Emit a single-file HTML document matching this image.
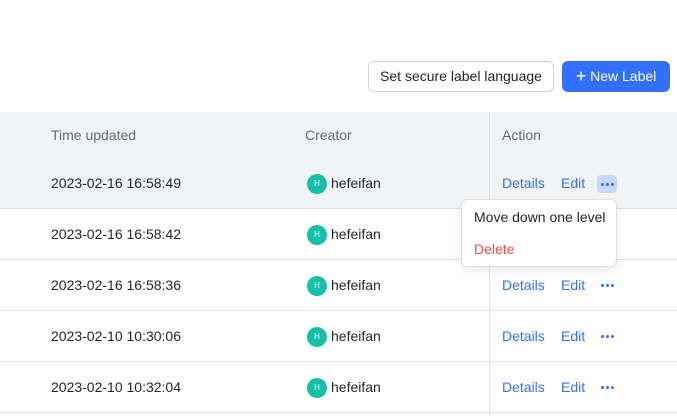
<!DOCTYPE html>
<html><head><style>
*{margin:0;padding:0;box-sizing:border-box}
body{width:677px;height:416px;background:#fff;font-family:"Liberation Sans",sans-serif;font-size:14px;color:#1f2329;position:relative;overflow:hidden}
.a{position:absolute}
.btn{position:absolute;top:61px;height:31px;border-radius:6px;font-size:14px;line-height:29px;text-align:center}
.hd{top:112px;left:0;width:677px;height:46px;background:#f2f3f5}
.row{left:0;width:677px;height:51px;border-bottom:1px solid #dee0e3}
.t{left:51px}
.av{left:307px;width:20px;height:20px;border-radius:50%;background:#14c0a8;color:#fff;font-size:8px;text-align:center;line-height:20px}
.nm{left:331px}
.lk{color:#3370ff}
.dots{width:20px;height:18px;border-radius:4px;display:flex;align-items:center;justify-content:center;gap:2px}
.dots i{display:block;width:3px;height:3px;border-radius:50%;background:#3370ff}
</style></head><body>
<div class="btn" style="left:368px;width:186px;border:1px solid #d0d3d6;color:#1f2329">Set secure label language</div>
<div class="btn" style="left:562px;width:108px;background:#3370ff;color:#fff;border:1px solid #3370ff"><span style="font-size:18px;vertical-align:-1px;font-weight:300">+</span> New Label</div>
<div class="a hd"></div>
<div class="a" style="top:127px;left:51px;color:#646a73">Time updated</div>
<div class="a" style="top:127px;left:305px;color:#646a73">Creator</div>
<div class="a" style="top:127px;left:502px;color:#646a73">Action</div>
<div class="a row" style="top:158px;height:51px;background:#f2f3f5"></div>
<div class="a row" style="top:209px"></div>
<div class="a row" style="top:260px"></div>
<div class="a row" style="top:311px"></div>
<div class="a row" style="top:362px"></div>
<div class="a" style="left:489px;top:112px;width:1px;height:304px;background:#dee0e3"></div>

<div class="a t" style="top:175px">2023-02-16 16:58:49</div>
<div class="a t" style="top:226px">2023-02-16 16:58:42</div>
<div class="a t" style="top:277px">2023-02-16 16:58:36</div>
<div class="a t" style="top:328px">2023-02-10 10:30:06</div>
<div class="a t" style="top:379px">2023-02-10 10:32:04</div>

<div class="a av" style="top:174px">H</div><div class="a nm" style="top:175px">hefeifan</div>
<div class="a av" style="top:225px">H</div><div class="a nm" style="top:226px">hefeifan</div>
<div class="a av" style="top:276px">H</div><div class="a nm" style="top:277px">hefeifan</div>
<div class="a av" style="top:327px">H</div><div class="a nm" style="top:328px">hefeifan</div>
<div class="a av" style="top:378px">H</div><div class="a nm" style="top:379px">hefeifan</div>

<div class="a lk" style="top:175px;left:502px">Details</div><div class="a lk" style="top:175px;left:561px">Edit</div>
<div class="a dots" style="top:175px;left:597px;background:#c9d7f9"><i></i><i></i><i></i></div>
<div class="a lk" style="top:277px;left:502px">Details</div><div class="a lk" style="top:277px;left:561px">Edit</div>
<div class="a dots" style="top:276px;left:597px"><i></i><i></i><i></i></div>
<div class="a lk" style="top:328px;left:502px">Details</div><div class="a lk" style="top:328px;left:561px">Edit</div>
<div class="a dots" style="top:327px;left:597px"><i></i><i></i><i></i></div>
<div class="a lk" style="top:379px;left:502px">Details</div><div class="a lk" style="top:379px;left:561px">Edit</div>
<div class="a dots" style="top:378px;left:597px"><i></i><i></i><i></i></div>

<div class="a" style="left:461px;top:199px;width:156px;height:68px;background:#fff;border:1px solid #dee0e3;border-radius:6px;box-shadow:0 4px 10px rgba(0,0,0,.08)">
<div class="a" style="left:12px;top:9px;color:#1f2329">Move down one level</div>
<div class="a" style="left:12px;top:41px;color:#f54a45">Delete</div>
</div>
</body></html>
